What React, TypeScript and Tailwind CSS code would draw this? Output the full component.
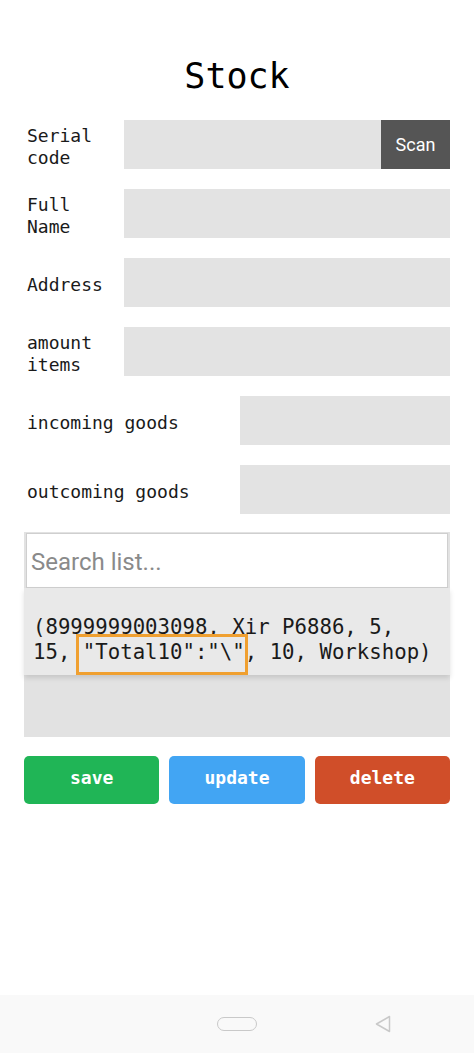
import React from "react";

const mono = "font-['DejaVu_Sans_Mono',monospace]";

interface Field {
  label: string;
  wide?: boolean;
  scan?: boolean;
}

const FIELDS: Field[] = [
  { label: "Serial code", scan: true },
  { label: "Full Name" },
  { label: "Address" },
  { label: "amount items" },
  { label: "incoming goods", wide: true },
  { label: "outcoming goods", wide: true },
];

function FormRow({ field }: { field: Field }) {
  return (
    <div className="flex h-[49px] items-center">
      <label
        className={`${field.wide ? "w-[216px]" : "w-[100px]"} shrink-0 pl-[3px] pr-[8px] pt-[5px] text-[18px] leading-[22px] text-[#1a1a1a] ${mono}`}
      >
        {field.label}
      </label>
      <div className="flex h-full min-w-0 flex-1">
        <input className="h-full w-full min-w-0 flex-1 bg-[#e3e3e3] outline-none" />
        {field.scan && (
          <button className="h-full w-[69px] shrink-0 bg-[#555555] font-['Roboto',sans-serif] text-[18px] text-white">
            Scan
          </button>
        )}
      </div>
    </div>
  );
}

export default function App() {
  return (
    <div className="flex min-h-[1053px] flex-col bg-white">
      <div className="px-6 pt-[54px]">
        <h1 className={`text-center text-[35px] leading-[44px] text-black ${mono}`}>Stock</h1>

        <div className="mt-[22px] flex flex-col gap-[20px]">
          {FIELDS.map((f) => (
            <FormRow key={f.label} field={f} />
          ))}
        </div>

        {/* list with search */}
        <div className="mt-[18px] bg-[#e2e2e2] px-[2px] pt-[1px]">
          <input
            placeholder="Search list..."
            className="h-[55px] w-full border border-[#cfcfcf] bg-white pl-[4px] pt-[3px] font-['Roboto',sans-serif] text-[24px] text-[#333] outline-none placeholder:text-[#8a8a8a]"
          />
        </div>
        <div className="bg-[#e2e2e2]">
          <div className="relative bg-[#e9e9e9] pb-[10px] pl-[9px] pt-[27px] shadow-[0_3px_5px_rgba(0,0,0,0.12)]">
            <p className={`text-[20.7px] leading-[25px] text-[#1a1a1a] ${mono}`}>
              (8999999003098, Xir P6886, 5,
              <br />
              15, "Total10":"\", 10, Workshop)
            </p>
            <div className="pointer-events-none absolute left-[52px] top-[46px] h-[41px] w-[172px] border-[3px] border-[#f0a030]" />
          </div>
          <div className="h-[62px]" />
        </div>

        <div className="mt-[19px] grid grid-cols-3 gap-[10px]">
          <button className={`h-[48px] rounded-[5px] bg-[#20b556] pb-[5px] text-[18px] font-bold text-white ${mono}`}>
            save
          </button>
          <button className={`h-[48px] rounded-[5px] bg-[#42a5f3] pb-[5px] text-[18px] font-bold text-white ${mono}`}>
            update
          </button>
          <button className={`h-[48px] rounded-[5px] bg-[#d04e29] pb-[5px] text-[18px] font-bold text-white ${mono}`}>
            delete
          </button>
        </div>
      </div>

      {/* system nav bar */}
      <div className="mt-auto flex h-[58px] items-center bg-[#f9f9f9]">
        <div className="ml-[217px] h-[14px] w-[40px] rounded-full border-[1.5px] border-[#c9c9c9]" />
        <svg className="ml-[117px]" width="18" height="20" viewBox="0 0 18 20" fill="none">
          <path
            d="M15.5 2.5 L2.5 10 L15.5 17.5 Z"
            stroke="#c9c9c9"
            strokeWidth="1.5"
            strokeLinejoin="round"
          />
        </svg>
      </div>
    </div>
  );
}
